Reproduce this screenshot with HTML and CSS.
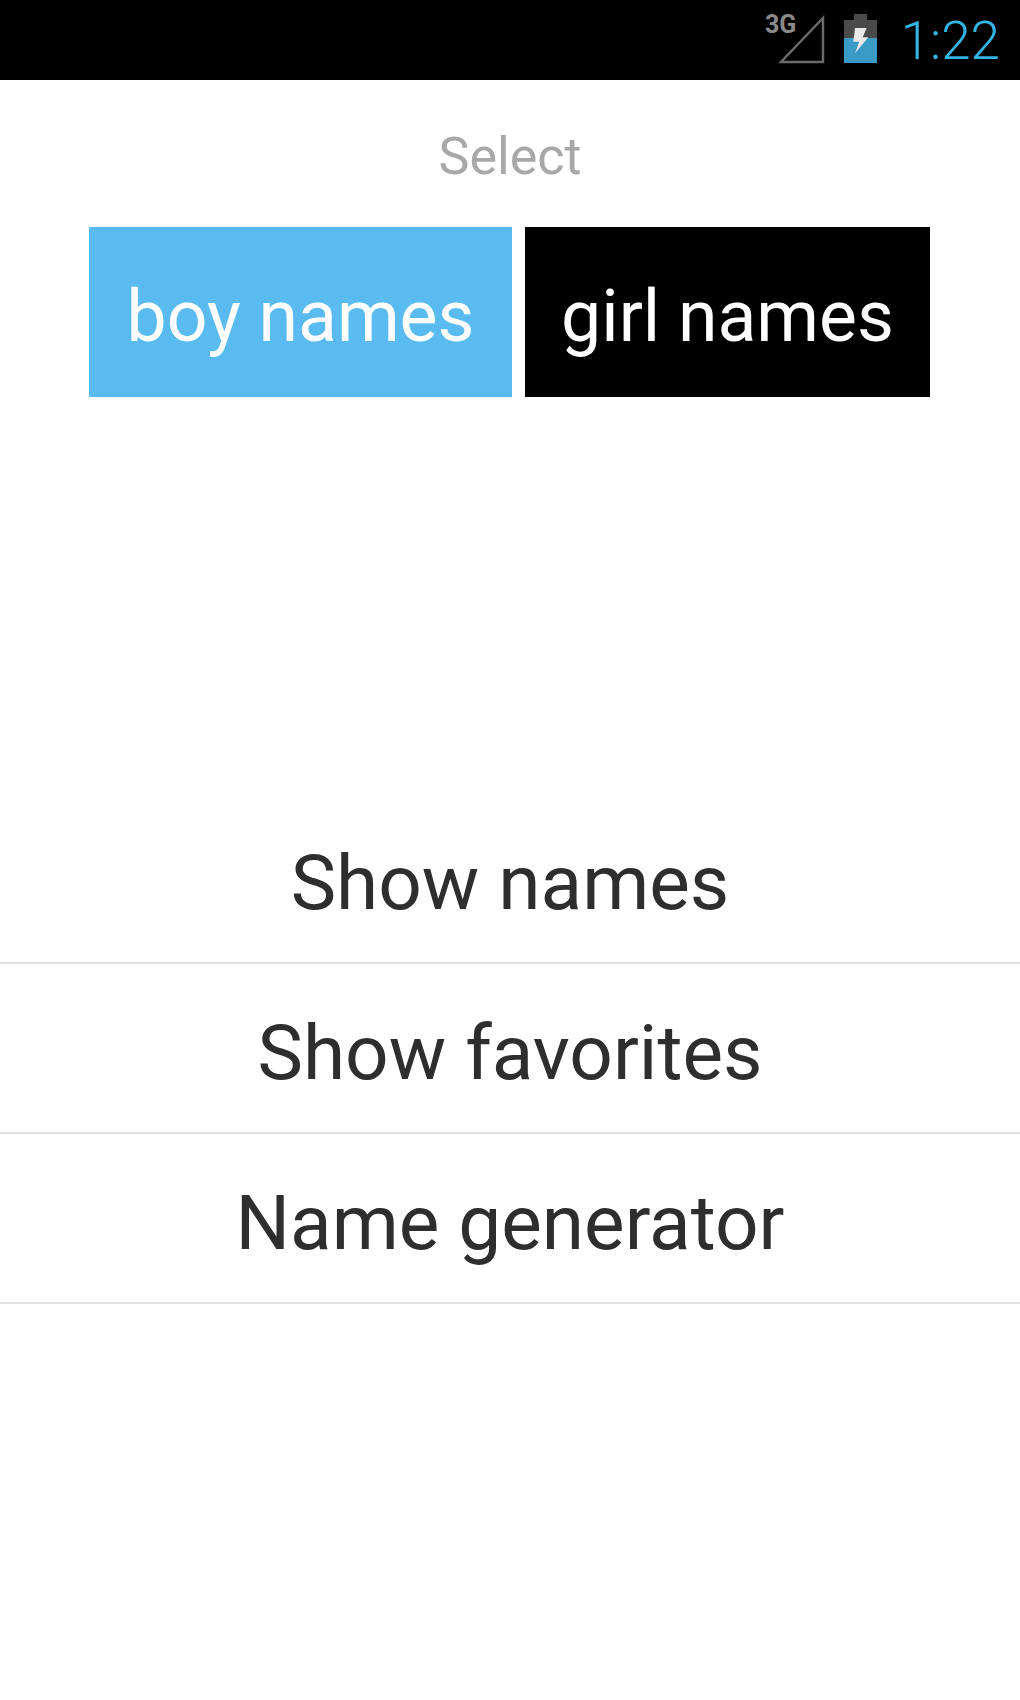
FILE: index.html
```html
<!DOCTYPE html>
<html lang="en">

<head>
    <meta charset="UTF-8" />
    <title>Baby names</title>
    <link rel="stylesheet" href="styles.css">
</head>

<body>
    <header class="status">
        <svg class="signal" width="60" height="58" viewBox="0 0 60 58">
            <text x="0" y="27" class="signal-label">3G</text>
            <path d="M16 56 L58 56 L58 12 Z" fill="none" stroke="#6a6a6a" stroke-width="2.5" />
        </svg>
        <svg class="battery" width="33" height="49" viewBox="0 0 33 49">
            <path d="M10 0 H23 V6 H33 V24 H0 V6 H10 Z" fill="#4a4a4a" />
            <rect x="0" y="24" width="33" height="25" fill="#3a9cc6" />
            <path d="M11 14 L9.3 27.7 L15.3 27.7 L11 39.3 L24.3 23.3 L18.7 23.3 L22.7 14 Z" fill="#e8e8e8" />
        </svg>
        <span class="time">1:22</span>
    </header>

    <main>
        <p class="select">Select</p>
        <div class="choices">
            <button class="choice boy">boy names</button>
            <button class="choice girl">girl names</button>
        </div>
        <ul class="menu">
            <li>Show names</li>
            <li>Show favorites</li>
            <li>Name generator</li>
        </ul>
    </main>
</body>

</html>
```

FILE: styles.css
```css
body {
    margin: 0;
    padding: 0;
    background-color: white;
    font-family: Roboto, "Liberation Sans", sans-serif;
}

.status {
    display: flex;
    align-items: flex-start;
    height: 80px;
    padding-right: 20px;
    background-color: black;
    justify-content: flex-end;
    box-sizing: border-box;
}

.signal {
    margin-top: 6px;
    margin-right: 19px;
}

.signal-label {
    font-family: Roboto, sans-serif;
    font-size: 25px;
    font-weight: 700;
    fill: #8a8a8a;
}

.battery {
    margin-top: 14px;
    margin-right: 24px;
}

.time {
    font-size: 53px;
    font-weight: 300;
    line-height: 82px;
    color: #33b5e5;
}

.select {
    margin: 0;
    padding-top: 47px;
    height: 100px;
    box-sizing: border-box;
    font-size: 52px;
    line-height: 60px;
    text-align: center;
    color: #a8a8a8;
}

.choices {
    display: flex;
    gap: 13px;
    margin-top: 47px;
    padding-left: 89px;
}

.choice {
    height: 170px;
    padding: 9px 0 0;
    border: none;
    font-family: inherit;
    font-size: 71.5px;
    color: white;
}

.boy {
    width: 423px;
    background-color: #59bbf0;
}

.girl {
    width: 405px;
    background-color: black;
}

.menu {
    margin: 397px 0 0;
    padding: 0;
    list-style: none;
}

.menu li {
    height: 170px;
    padding-top: 11px;
    box-sizing: border-box;
    border-bottom: 2px solid #e2e2e2;
    font-size: 76.5px;
    line-height: 157px;
    text-align: center;
    color: #2e2e2e;
}
```
